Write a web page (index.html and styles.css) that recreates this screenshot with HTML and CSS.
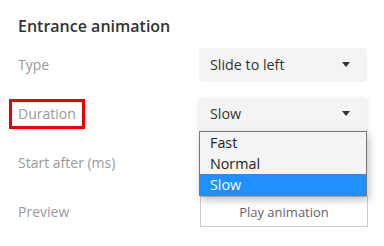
FILE: index.html
```html
<!DOCTYPE html>
<html>
<head>
<meta charset="utf-8">
<link rel="stylesheet" href="styles.css">
</head>
<body>
<div class="panel">
  <h2 class="title">Entrance animation</h2>
  <div class="form">
    <div class="row">
      <span class="label">Type</span>
      <div class="select"><span>Slide to left</span><span class="caret"></span></div>
    </div>
    <div class="row">
      <span class="label highlighted">Duration</span>
      <div class="select-wrap">
        <div class="select focused"><span>Slow</span><span class="caret"></span></div>
        <ul class="options">
          <li>Fast</li>
          <li>Normal</li>
          <li class="selected">Slow</li>
        </ul>
      </div>
    </div>
    <div class="row">
      <span class="label">Start after (ms)</span>
      <div class="input"></div>
    </div>
    <div class="row">
      <span class="label">Preview</span>
      <button class="play">Play animation</button>
    </div>
  </div>
</div>
</body>
</html>
```
FILE: styles.css
```css
html, body {
  margin: 0;
  padding: 0;
  background: #ffffff;
}
body {
  width: 384px;
  height: 246px;
  overflow: hidden;
  font-family: "Open Sans", "Noto Sans", sans-serif;
}
.panel {
  padding: 15px 17px 0 18px;
}
.title {
  margin: 0;
  height: 25px;
  font-size: 16px;
  line-height: 22px;
  font-weight: 600;
  color: #333333;
}
.form {
  display: flex;
  flex-direction: column;
}
.row {
  display: grid;
  grid-template-columns: 181px 168px;
  align-items: center;
  height: 49px;
}
.label {
  font-size: 14px;
  color: #9a9a9a;
  justify-self: start;
  line-height: 18px;
}
.label.highlighted {
  outline: 3px solid #ee0000;
  outline-offset: 0;
  padding: 3px 6px 3px 6px;
  margin-left: -6px;
}
.select {
  height: 34px;
  box-sizing: border-box;
  background: #f4f4f4;
  border-radius: 4px;
  display: flex;
  align-items: center;
  justify-content: space-between;
  padding: 0 17px 0 11px;
  font-size: 14.3px;
  color: #333333;
}
.select.focused {
  box-shadow: 0 2px 5px rgba(0, 0, 0, 0.12);
}
.caret {
  width: 0;
  height: 0;
  border-left: 4px solid transparent;
  border-right: 4px solid transparent;
  border-top: 5px solid #333333;
}
.select-wrap {
  position: relative;
}
.options {
  position: absolute;
  left: 0;
  top: 34px;
  width: 168px;
  box-sizing: border-box;
  margin: 0;
  padding: 0;
  list-style: none;
  background: #f4f4f4;
  border: 1px solid #777777;
  box-shadow: 2px 4px 8px rgba(0, 0, 0, 0.25);
  z-index: 2;
}
.options li {
  height: 21px;
  line-height: 21px;
  padding-left: 10px;
  font-size: 14.3px;
  color: #222222;
}
.options li.selected {
  background: #1e90ff;
  color: #ffffff;
}
.input {
  height: 30px;
}
.play {
  width: 168px;
  height: 31px;
  margin-left: 1px;
  box-sizing: border-box;
  background: #ffffff;
  border: 1px solid #cccccc;
  font-family: "Open Sans", "Noto Sans", sans-serif;
  font-size: 13px;
  color: #666666;
  padding: 0;
}
```
